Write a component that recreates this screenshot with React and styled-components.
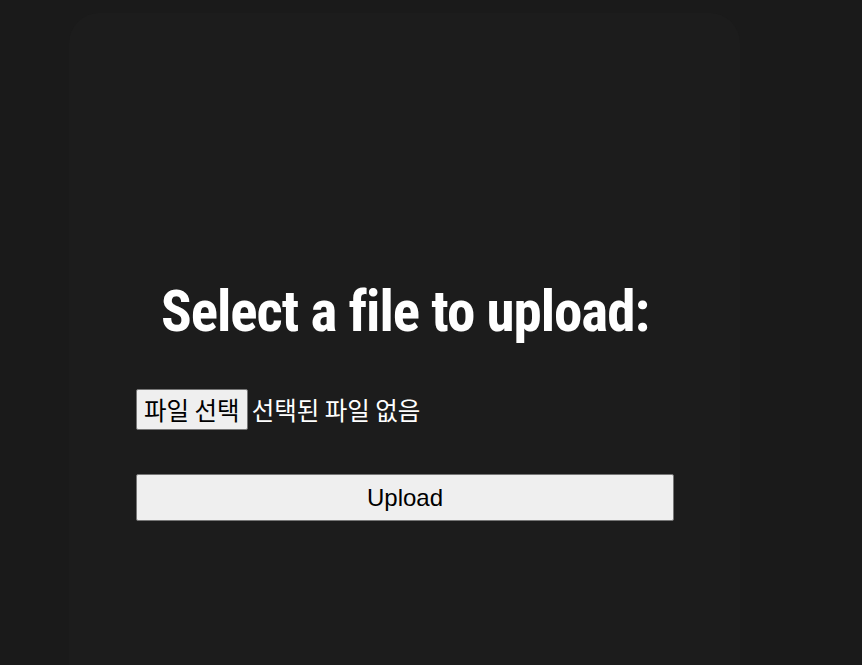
import React from 'react';
import styled, { createGlobalStyle } from 'styled-components';

const GlobalStyle = createGlobalStyle`
  html, body {
    margin: 0;
    padding: 0;
    background-color: #1a1a1a;
    overflow: hidden;
  }
`;

const Page = styled.div`
  display: flex;
  padding: 13px 0 0 69px;
  height: 665px;
  box-sizing: border-box;
  overflow: hidden;
`;

const Card = styled.div`
  width: 671px;
  min-height: 720px;
  background-color: #1c1c1c;
  border-radius: 30px 30px 0 0;
  box-sizing: border-box;
  padding: 262px 66px 0 67px;
  display: flex;
  flex-direction: column;
`;

const Title = styled.h1`
  margin: 0 0 40px 0;
  text-align: center;
  color: #fff;
  font-family: "Roboto Condensed", "Liberation Sans Narrow", Roboto, sans-serif;
  font-weight: 700;
  font-size: 57px;
  letter-spacing: -1px;
  line-height: 1.3;
`;

const FileRow = styled.div`
  display: flex;
  align-items: center;
  gap: 4px;
  margin-bottom: 44px;
  font-family: "Noto Sans CJK KR", "Noto Sans", sans-serif;
  font-size: 24.5px;
  color: #fff;
`;

const HiddenInput = styled.input`
  display: none;
`;

const PickButton = styled.label`
  display: inline-flex;
  align-items: center;
  height: 41px;
  box-sizing: border-box;
  padding: 0 7px;
  background-color: #efefef;
  color: #000;
  border: 1px solid #767676;
  border-radius: 2px;
  cursor: pointer;
`;

const UploadButton = styled.button`
  width: 100%;
  height: 47px;
  background-color: #efefef;
  color: #000;
  border: 1px solid #767676;
  border-radius: 2px;
  font-family: "Liberation Sans", Arial, sans-serif;
  font-size: 24px;
  cursor: pointer;
`;

export default function App() {
  return (
    <>
      <GlobalStyle />
      <Page>
        <Card>
          <Title>Select a file to upload:</Title>
          <FileRow>
            <PickButton htmlFor="file">파일 선택</PickButton>
            <HiddenInput id="file" type="file" />
            <span>선택된 파일 없음</span>
          </FileRow>
          <UploadButton type="button">Upload</UploadButton>
        </Card>
      </Page>
    </>
  );
}
